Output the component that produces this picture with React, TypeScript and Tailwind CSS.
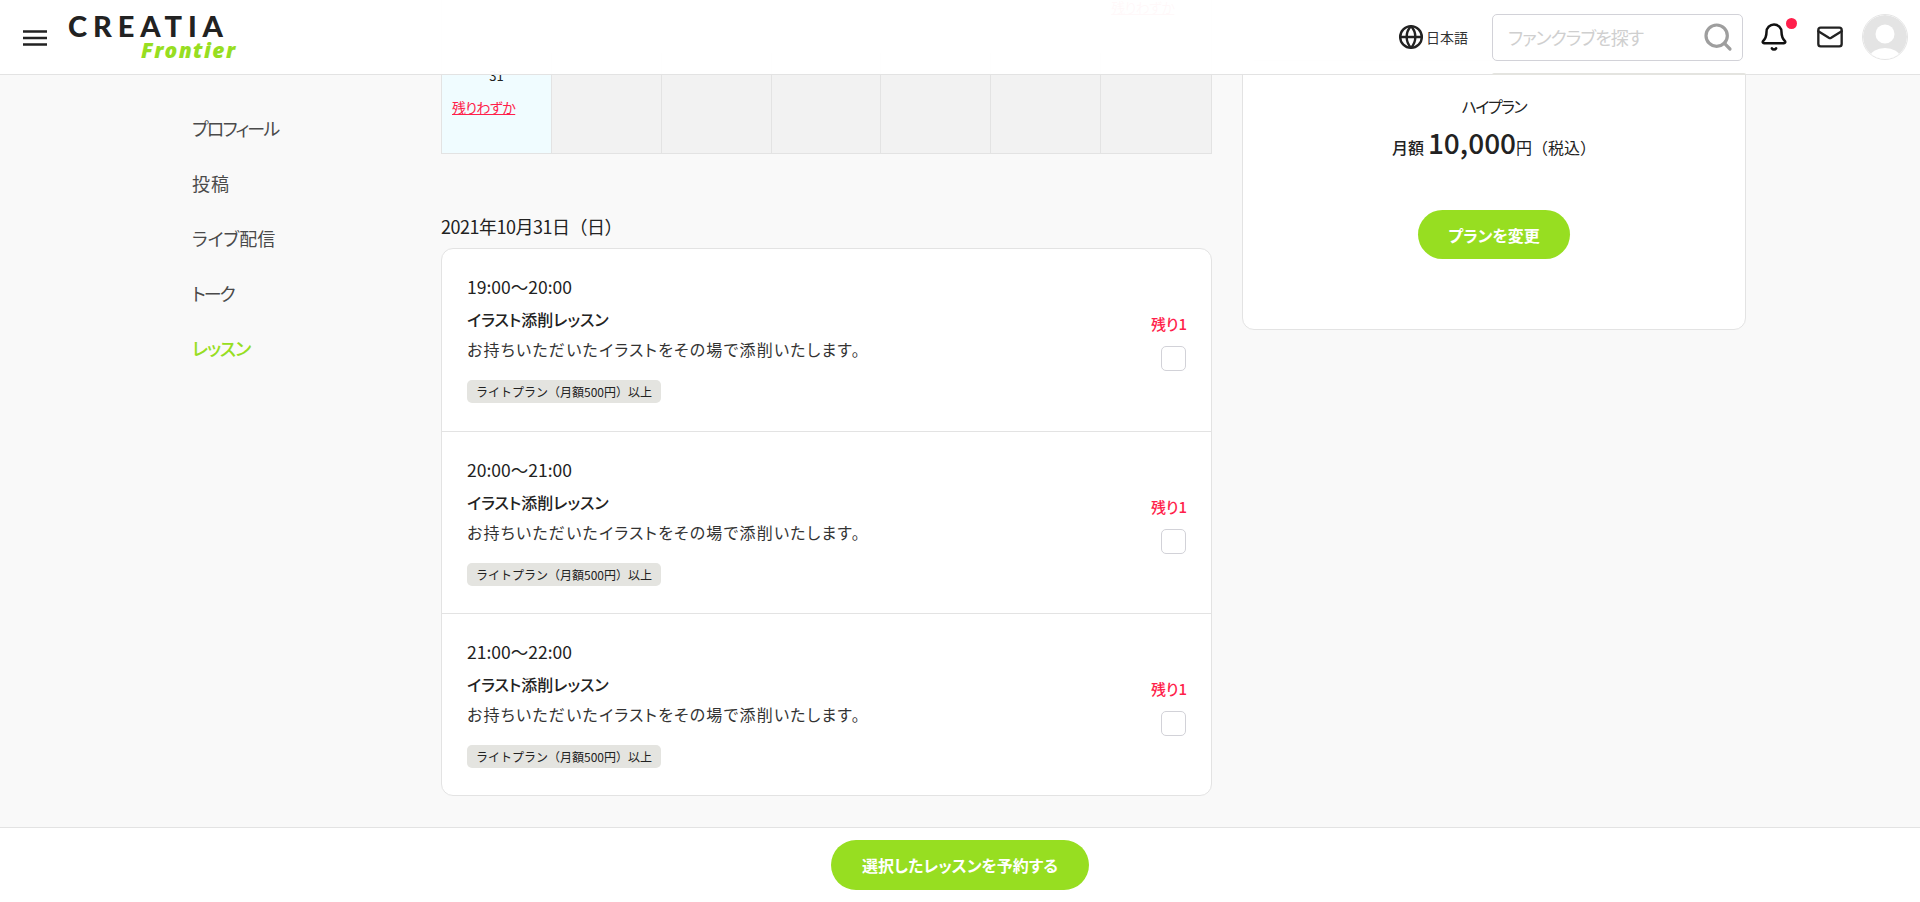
import { Bell, Globe, Mail, Search } from 'lucide-react';

const sideItems = [
  { label: 'プロフィール', tracking: 'tracking-[-1.8px]' },
  { label: '投稿', tracking: 'tracking-[1px]' },
  { label: 'ライブ配信', tracking: 'tracking-normal' },
  { label: 'トーク', tracking: 'tracking-[-2px]' },
  { label: 'レッスン', tracking: 'tracking-[-1px]' },
];
const lessons = [
  { time: '19:00～20:00', height: 'h-[183px]' },
  { time: '20:00～21:00', height: 'h-[182px]' },
  { time: '21:00～22:00', height: 'h-[181px]' },
];

function Avatar() {
  return (
    <svg width="46" height="46" viewBox="0 0 46 46" className="shrink-0">
      <clipPath id="avatar-clip">
        <circle cx="23" cy="23" r="22" />
      </clipPath>
      <circle cx="23" cy="23" r="22.5" fill="#fff" stroke="#e4e4e4" />
      <g clipPath="url(#avatar-clip)">
        <circle cx="23" cy="23" r="22" fill="#e4e4e4" />
        <circle cx="23" cy="20" r="9.5" fill="#fff" />
        <ellipse cx="23" cy="43" rx="15" ry="9" fill="#fff" />
      </g>
    </svg>
  );
}

function Header() {
  return (
    <header className="absolute top-0 left-0 w-full h-[75px] bg-white/[.97] border-b border-[#e3e3e3] flex items-center">
      <svg width="24" height="16" viewBox="0 0 24 16" className="ml-[23px] mt-[1px]">
        <path d="M0 1.5h24M0 8h24M0 14.5h24" stroke="#222" strokeWidth="2.4" />
      </svg>
      <div className="ml-[21px] w-[170px] h-[50px] relative mt-[-2px]">
        <div className="absolute left-0 top-[1px] text-[29px] leading-[28px] font-black tracking-[5.9px] text-[#222] [font-family:Lato,sans-serif]">
          CREATIA
        </div>
        <div className="absolute left-[73px] top-[30px] text-[21px] leading-[18px] font-black italic tracking-[1.4px] text-[#97de21] [font-family:'Noto_Sans',sans-serif]">
          Frontier
        </div>
      </div>
      <div className="ml-auto flex items-center">
        <Globe size={26} strokeWidth={2.2} className="text-[#222]" />
        <span className="ml-[2px] text-[14px] text-[#333]">日本語</span>
        <div className="ml-[24px] w-[251px] h-[47px] bg-white border border-[#d2d2d8] rounded-[5px] flex items-center justify-between pl-[15px] pr-[8px]">
          <span className="text-[18px] tracking-[-1px] text-[#cfcfcf]">ファンクラブを探す</span>
          <Search size={32} strokeWidth={2.4} className="text-[#9e9e9e]" />
        </div>
        <div className="relative ml-[16px]">
          <Bell size={30} strokeWidth={2} className="text-[#111]" />
          <span className="absolute right-[-8px] top-[-4px] w-[11px] h-[11px] rounded-full bg-[#ff1f4b]" />
        </div>
        <Mail size={28} strokeWidth={2} className="ml-[27px] text-[#222]" />
        <div className="ml-[18px] mr-[12px]">
          <Avatar />
        </div>
      </div>
      <div className="absolute left-[1492px] top-[73px] w-[254px] h-[2px] bg-[#e4e4e0] rounded-t-[4px]" />
    </header>
  );
}

function Calendar() {
  return (
    <div className="border border-[#e3e3e3] grid grid-cols-7">
      {[0, 1, 2, 3, 4, 5, 6].map((i) => (
        <div key={i} className="h-[100px] bg-white flex flex-col pl-[10px]">
          {i === 6 && (
            <span className="mt-[44px] text-[14px] leading-[20px] tracking-[-0.6px] underline text-[#ff1f4b]">残りわずか</span>
          )}
        </div>
      ))}
      <div className="h-[100px] bg-[#f0fcff] border-r border-[#e3e3e3] flex flex-col pl-[10px]">
        <span className="mt-[13px] mr-[10px] text-center text-[13px] leading-[20px] text-[#222]">31</span>
        <span className="mt-[11px] text-[14px] leading-[20px] tracking-[-0.6px] underline text-[#ff1f4b]">残りわずか</span>
      </div>
      {[1, 2, 3, 4, 5, 6].map((i) => (
        <div key={i} className={`h-[100px] bg-[#f2f2f2] ${i < 6 ? 'border-r border-[#e3e3e3]' : ''}`} />
      ))}
    </div>
  );
}

function LessonRow({ time, height, last }: { time: string; height: string; last: boolean }) {
  return (
    <div className={`${height} ${last ? '' : 'border-b border-[#e3e3e3]'} pt-[26px] pl-[25px] pr-[25px] flex justify-between`}>
      <div className="text-[#222]">
        <div className="text-[17.5px] leading-[24px]">{time}</div>
        <div className="mt-[8px] text-[16px] leading-[24px] font-medium">イラスト添削レッスン</div>
        <div className="mt-[6px] text-[16px] leading-[24px] tracking-[1.2px] text-[#333]">お持ちいただいたイラストをその場で添削いたします。</div>
        <div className="mt-[19px] w-fit h-[23px] px-[9px] rounded-[5px] bg-[#e4e4e0] text-[12px] leading-[23px] [font-feature-settings:normal]">
          ライトプラン（月額500円）以上
        </div>
      </div>
      <div className="flex flex-col items-end pt-[37px]">
        <span className="mr-[-1px] text-[15px] leading-[24px] font-medium text-[#ff1f4b]">残り1</span>
        <span className="mt-[10px] w-[25px] h-[25px] rounded-[5px] border-[1.5px] border-[#d2d2d8] bg-white" />
      </div>
    </div>
  );
}

export default function App() {
  return (
    <div className="relative w-full h-[902px] overflow-hidden bg-[#f9f9f9] text-[#222] [font-family:'Noto_Sans_CJK_JP',sans-serif] [font-feature-settings:'palt']">
      <div className="flex items-start">
        <nav className="w-[441px] pl-[192px] mt-[101px]">
          {sideItems.map((item) => (
            <div
              key={item.label}
              className={`h-[55px] flex items-center text-[18px] ${item.tracking} ${item.label === 'レッスン' ? 'text-[#97de21] font-medium' : 'text-[#4a4a4a]'}`}
            >
              {item.label}
            </div>
          ))}
        </nav>

        <main className="w-[771px] mt-[-48px]">
          <Calendar />
          <h2 className="mt-[58px] text-[18px] leading-[28px] font-normal tracking-[-0.5px] [font-feature-settings:normal] [text-spacing-trim:space-all]">
            2021年10月31日（日）
          </h2>
          <div className="mt-[8px] bg-white border border-[#e3e3e3] rounded-[12px]">
            {lessons.map((lesson, i) => (
              <LessonRow key={lesson.time} time={lesson.time} height={lesson.height} last={i === lessons.length - 1} />
            ))}
          </div>
        </main>

        <aside className="w-[504px] ml-[30px] mt-[60px] h-[270px] bg-white border border-[#e3e3e3] rounded-[12px] flex flex-col items-center">
          <div className="mt-[33px] text-[16px] leading-[24px] tracking-[-1.5px]">ハイプラン</div>
          <div className="mt-[8px] flex items-baseline text-[16px] leading-[32px]">
            <span className="font-medium">月額</span>
            <span className="ml-[4px] text-[28px] font-medium">10,000</span>
            <span>円</span>
            <span className="[font-feature-settings:normal] [text-spacing-trim:space-all]">（税込）</span>
          </div>
          <button className="mt-[47px] w-[152px] h-[49px] rounded-full bg-[#97de21] text-white text-[16px] font-bold">
            プランを変更
          </button>
        </aside>
      </div>

      <Header />

      <footer className="absolute bottom-0 left-0 w-full h-[75px] bg-white border-t border-[#e3e3e3] flex justify-center pt-[12px]">
        <button className="w-[258px] h-[50px] rounded-full bg-[#97de21] text-white text-[16px] font-bold">
          選択したレッスンを予約する
        </button>
      </footer>
    </div>
  );
}
